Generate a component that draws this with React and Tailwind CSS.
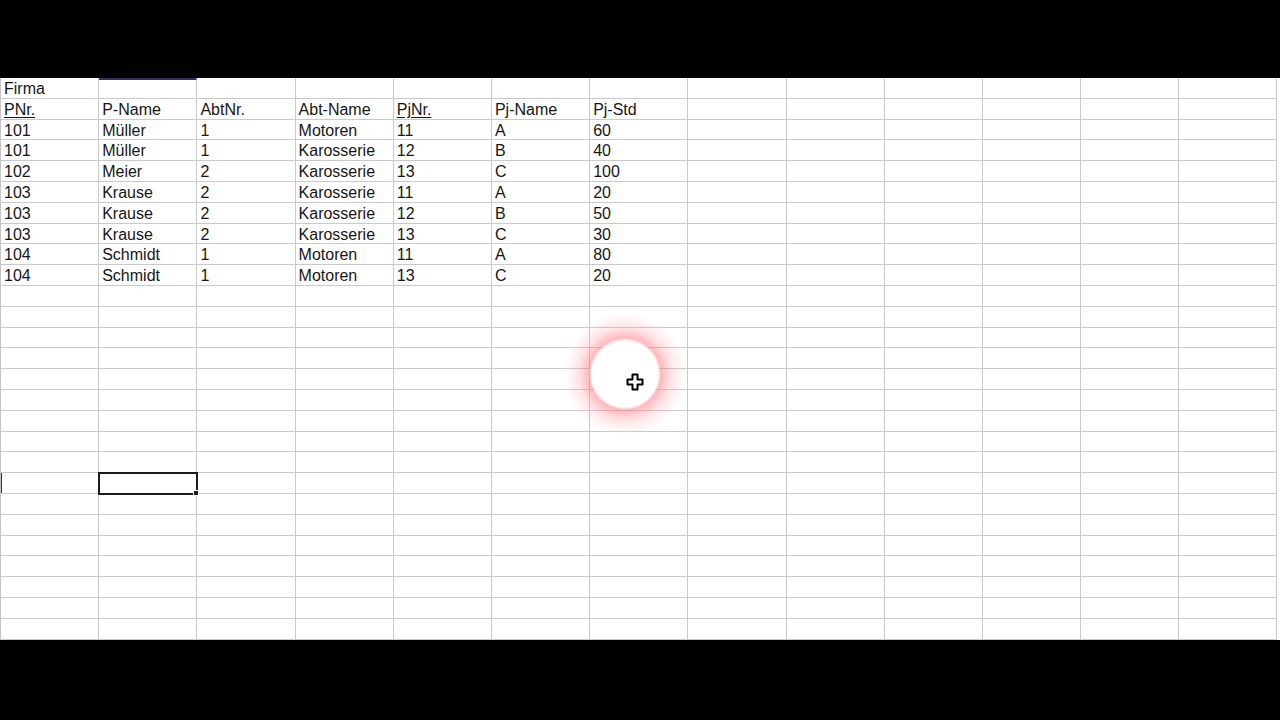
const COLS = 13
const ROWS = 27

const data = [
  ['Firma'],
  ['PNr.', 'P-Name', 'AbtNr.', 'Abt-Name', 'PjNr.', 'Pj-Name', 'Pj-Std'],
  ['101', 'Müller', '1', 'Motoren', '11', 'A', '60'],
  ['101', 'Müller', '1', 'Karosserie', '12', 'B', '40'],
  ['102', 'Meier', '2', 'Karosserie', '13', 'C', '100'],
  ['103', 'Krause', '2', 'Karosserie', '11', 'A', '20'],
  ['103', 'Krause', '2', 'Karosserie', '12', 'B', '50'],
  ['103', 'Krause', '2', 'Karosserie', '13', 'C', '30'],
  ['104', 'Schmidt', '1', 'Motoren', '11', 'A', '80'],
  ['104', 'Schmidt', '1', 'Motoren', '13', 'C', '20'],
]

// key columns in the header row are underlined
const underlined = new Set(['1-0', '1-4'])
const ACTIVE = '19-1'

function MoveCursor() {
  return (
    <svg width="18" height="18" viewBox="0 0 18 18">
      <path
        d="M6.5 1.5h5v5h5v5h-5v5h-5v-5h-5v-5h5z"
        fill="#fff"
        stroke="#000"
        strokeWidth="2"
        strokeLinejoin="round"
      />
    </svg>
  )
}

export default function App() {
  const cells = []
  for (let r = 0; r < ROWS; r++) {
    for (let c = 0; c < COLS; c++) {
      const key = `${r}-${c}`
      const text = data[r]?.[c] ?? ''
      const active = key === ACTIVE
      cells.push(
        <div
          key={key}
          className={`relative h-[20.8px] border-r border-b border-[#cacaca] pl-[3px] leading-[21px] text-[16px] text-[#161616] whitespace-nowrap ${
            active ? 'outline-2 outline-[#1a1a1a] -outline-offset-1 z-10' : 'overflow-hidden'
          } ${r === 0 && c === 1 ? 'border-t-2 border-t-[#2a3360]' : ''}`}
        >
          <span className={underlined.has(key) ? 'underline underline-offset-[2px]' : ''}>{text}</span>
          {active && <div className="absolute -right-[3px] -bottom-[3px] w-[6px] h-[6px] bg-[#1a1a1a] border border-white" />}
          {r === 19 && c === 0 && <div className="absolute -left-[1px] top-0 w-[2px] h-full bg-[#2a3360]" />}
        </div>
      )
    }
  }

  return (
    <div className="w-[1280px] h-[720px] bg-black flex flex-col overflow-hidden" style={{ fontFamily: '"Liberation Sans", Arial, sans-serif' }}>
      <div className="h-[78px] shrink-0" />

      <div className="relative h-[562px] shrink-0 bg-white overflow-hidden border-l border-[#c4c4c4]">
        <div className="grid grid-cols-[repeat(13,98.2px)]">
          {cells}
        </div>

        {/* click highlight with cursor */}
        <div className="absolute left-[563px] top-[235px] w-[122px] h-[122px] rounded-full flex items-center justify-center bg-[radial-gradient(circle,#ffffff_0px,#ffffff_33px,rgba(255,115,125,0.5)_36px,rgba(255,140,150,0.22)_47px,rgba(255,200,200,0)_61px)]">
          <div className="translate-x-[10px] translate-y-[8px]">
            <MoveCursor />
          </div>
        </div>
      </div>

      <div className="flex-1" />
    </div>
  )
}
